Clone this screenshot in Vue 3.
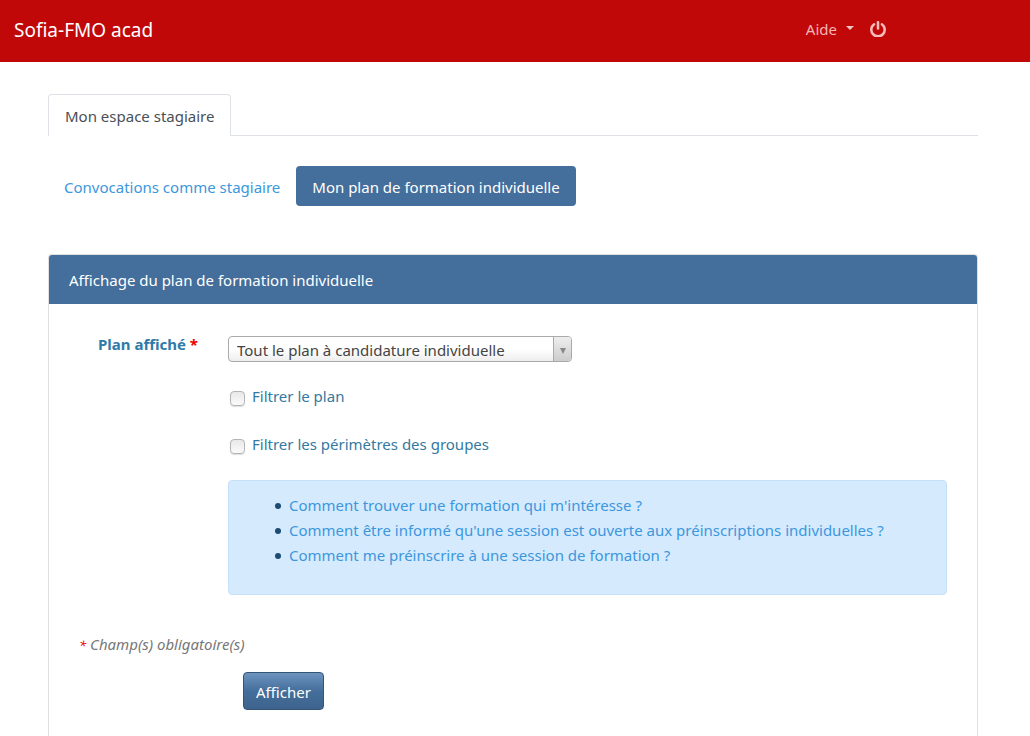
<script setup>
import { ref } from 'vue'

const plans = ['Tout le plan à candidature individuelle']
const plan = ref(plans[0])
const filters = ref([
  { id: 'filter-plan', label: 'Filtrer le plan', on: false },
  { id: 'filter-groups', label: 'Filtrer les périmètres des groupes', on: false },
])
const questions = [
  "Comment trouver une formation qui m'intéresse ?",
  "Comment être informé qu'une session est ouverte aux préinscriptions individuelles ?",
  'Comment me préinscrire à une session de formation ?',
]
</script>

<template>
  <div class="page">
    <header class="topbar">
      <a class="brand" href="#">Sofia-FMO acad</a>
      <nav class="topnav">
        <button type="button" class="help">Aide <span class="caret"></span></button>
        <a class="power" href="#" aria-label="Déconnexion">
          <svg viewBox="0 0 16 16" width="16" height="16" aria-hidden="true">
            <path d="M4.1 3.2A6.7 6.7 0 1 0 11.9 3.2" />
            <path d="M8 1.1V7.4" />
          </svg>
        </a>
      </nav>
    </header>

    <main class="content">
      <nav class="tabs">
        <a class="tab" href="#">Mon espace stagiaire</a>
      </nav>

      <nav class="pills">
        <a class="pill" href="#">Convocations comme stagiaire</a>
        <a class="pill active" href="#">Mon plan de formation individuelle</a>
      </nav>

      <section class="card">
        <h1 class="card-header">Affichage du plan de formation individuelle</h1>
        <form class="card-body" @submit.prevent>
          <div class="fields">
            <label class="main-label" for="plan">Plan affiché <span class="star">*</span></label>
            <div class="select-wrap">
              <select id="plan" v-model="plan">
                <option v-for="p in plans" :key="p">{{ p }}</option>
              </select>
              <span class="arrow"></span>
            </div>

            <div v-for="f in filters" :key="f.id" class="check">
              <input :id="f.id" v-model="f.on" type="checkbox" />
              <label :for="f.id">{{ f.label }}</label>
            </div>

            <div class="info">
              <ul>
                <li v-for="q in questions" :key="q"><a href="#">{{ q }}</a></li>
              </ul>
            </div>
          </div>

          <p class="note"><span class="star">*</span> Champ(s) obligatoire(s)</p>
          <button class="submit" type="submit">Afficher</button>
        </form>
      </section>
    </main>
  </div>
</template>

<style>
body {
  margin: 0;
  background: #fff;
}
</style>

<style scoped>
.page {
  display: flex;
  flex-direction: column;
  min-height: 100vh;
  font-family: "Segoe UI", "Noto Sans", "Open Sans", sans-serif;
  font-size: 15px;
  line-height: 24px;
  color: #495057;
}
.page * {
  box-sizing: border-box;
}
a {
  text-decoration: none;
}
button,
select {
  font: inherit;
}
.topbar {
  display: flex;
  align-items: center;
  justify-content: space-between;
  height: 62px;
  padding: 0 144px 4px 14px;
  background: #c10808;
}
.brand {
  padding-top: 2px;
  font-size: 19px;
  color: #fff;
}
.topnav {
  display: flex;
  align-items: center;
  gap: 16px;
}
.help {
  display: flex;
  align-items: center;
  gap: 9px;
  padding: 0;
  border: 0;
  background: none;
  color: #f3b5b5;
}
.caret {
  border: 4px solid transparent;
  border-top-color: #f3c4c4;
  border-bottom: 0;
  margin-bottom: 2px;
}
.power {
  display: flex;
}
.power svg {
  fill: none;
  stroke: #f7bcbc;
  stroke-width: 2.5;
  stroke-linecap: round;
}
.content {
  flex: 1;
  display: flex;
  flex-direction: column;
  padding: 32px 52px 0 48px;
}
.tabs {
  display: flex;
  border-bottom: 1px solid #dee2e6;
}
.tab {
  margin-bottom: -1px;
  padding: 9px 16px 8px;
  border: 1px solid #dee2e6;
  border-bottom: 0;
  border-radius: 4px 4px 0 0;
  background: #fff;
  color: #495057;
}
.pills {
  display: flex;
  margin: 30px 0 48px;
}
.pill {
  padding: 9px 16px 7px;
  border-radius: 4px;
  color: #3c97dd;
}
.pill.active {
  background: #446e9b;
  color: #fff;
}
.card {
  flex: 1;
  border: 1px solid #dfdfdf;
  border-bottom: 0;
  border-radius: 4px 4px 0 0;
}
.card-header {
  margin: 0;
  padding: 13px 20px 12px;
  border-radius: 3px 3px 0 0;
  background: #446e9b;
  color: #fff;
  font-size: 15px;
  font-weight: 400;
  line-height: 24px;
}
.card-body {
  padding: 28px 30px;
}
.fields {
  display: grid;
  grid-template-columns: 119px 1fr;
  column-gap: 30px;
}
.fields > * {
  grid-column: 2;
}
.fields > .main-label {
  grid-column: 1;
  text-align: right;
  font-weight: 700;
  color: #2f7ba8;
}
.star {
  color: #e00;
}
.note .star {
  font-size: 13px;
}
.select-wrap {
  position: relative;
  width: 344px;
  max-width: 100%;
  margin-top: 4px;
}
.select-wrap select {
  display: block;
  width: 100%;
  height: 26px;
  padding: 2px 24px 0 8px;
  appearance: none;
  border: 1px solid #aaa;
  border-radius: 4px;
  background: linear-gradient(#fff 50%, #eee);
  color: #444;
  line-height: 22px;
}
.arrow {
  position: absolute;
  top: 1px;
  right: 1px;
  bottom: 1px;
  width: 18px;
  display: flex;
  align-items: center;
  justify-content: center;
  border-left: 1px solid #aaa;
  border-radius: 0 3px 3px 0;
  background: linear-gradient(#eee, #ccc);
  pointer-events: none;
}
.arrow::after {
  content: "";
  margin-top: 4px;
  border: 3px solid transparent;
  border-top: 6px solid #888;
  border-bottom: 0;
}
.check {
  display: flex;
  align-items: center;
  gap: 7px;
  margin-top: 24px;
  padding-left: 2px;
  color: #34799f;
}
.select-wrap + .check {
  margin-top: 22px;
}
.check input {
  width: 15px;
  height: 15px;
  margin: 5px 0 0;
  appearance: none;
  border: 1px solid #b4b4b4;
  border-radius: 4px;
  background: linear-gradient(#e8e8e8, #fbfbfb);
  box-shadow: 0 1px 1px #ddd;
}
.check input:checked {
  background: #446e9b;
}
.info {
  margin-top: 24px;
  padding: 12px 20px 26px;
  border: 1px solid #c6e0f8;
  border-radius: 4px;
  background: #d5eafd;
  color: #1c4b74;
}
.info ul {
  margin: 0;
  padding: 0 0 0 24px;
  list-style: none;
}
.info li {
  display: flex;
  align-items: center;
  gap: 8px;
  padding-left: 2px;
  line-height: 25px;
}
.info li::before {
  content: "";
  flex: none;
  width: 6px;
  height: 6px;
  border-radius: 50%;
  background: #1c4b74;
}
.info a {
  color: #3c97dd;
}
.note {
  margin: 37px 0 15px;
  font-style: italic;
  color: #777;
}
.submit {
  height: 38px;
  margin-left: 164px;
  padding: 2px 12px 0;
  border: 1px solid #345578;
  border-radius: 4px;
  background: linear-gradient(#6d94bf, #446e9b 50%, #3e648d);
  color: #fff;
}
</style>
